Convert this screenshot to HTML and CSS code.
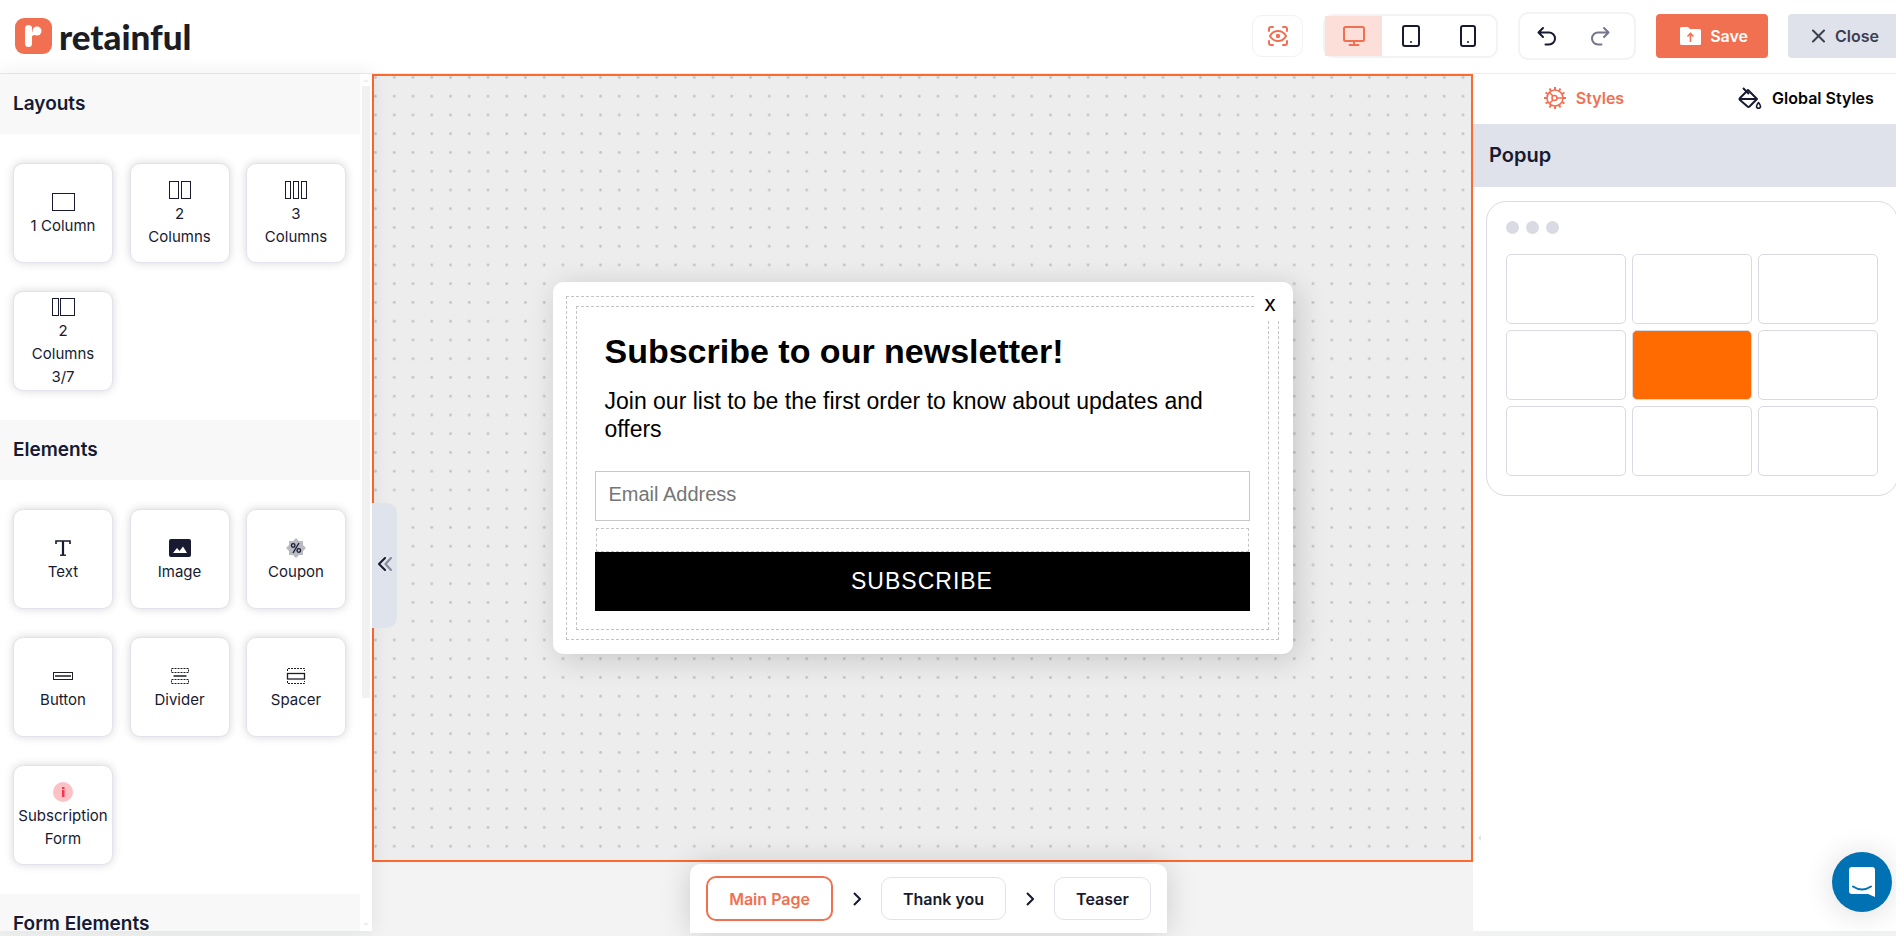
FILE: index.html
```
<!DOCTYPE html>
<html lang="en">
<head>
    <meta charset="UTF-8">
    <meta name="viewport" content="width=device-width, initial-scale=1.0">
    <title>Retainful - Popup Editor</title>
    <link rel="stylesheet" href="styles.css">
</head>
<body>
    <!-- Top bar -->
    <header class="topbar">
        <a class="logo" href="#">
            <svg width="37" height="36" viewBox="0 0 37 36"><rect width="37" height="36" rx="9" fill="#f27052"/><rect x="10" y="7" width="7" height="22" rx="3.500" fill="#fff"/><path d="M15 17c3 0 4-2 5-4" stroke="#fff" stroke-width="3" fill="none"/><circle cx="22" cy="13" r="4.500" fill="#fff"/></svg>
            <span>retainful</span>
        </a>
        <div class="actions">
            <button class="preview" type="button" aria-label="Preview">
                <svg width="22" height="22" viewBox="0 0 22 22" fill="none" stroke="#f27052" stroke-width="2" stroke-linecap="round"><path d="M2 6V4a2 2 0 0 1 2-2h2M16 2h2a2 2 0 0 1 2 2v2M20 16v2a2 2 0 0 1-2 2h-2M6 20H4a2 2 0 0 1-2-2v-2"/><path d="M3 11c2-3.500 5-5 8-5s6 1.500 8 5c-2 3.500-5 5-8 5s-6-1.500-8-5z"/><circle cx="11" cy="11" r="1.200" fill="#f27052"/></svg>
            </button>
            <div class="group devices">
                <button class="active" type="button" aria-label="Desktop">
                    <svg width="24" height="22" viewBox="0 0 24 22" fill="none" stroke="#f27052" stroke-width="2" stroke-linecap="round"><rect x="2" y="2" width="20" height="14" rx="1.500"/><path d="M12 16v4M7.500 20h9"/></svg>
                </button>
                <button type="button" aria-label="Tablet">
                    <svg width="20" height="24" viewBox="0 0 20 24" fill="none" stroke="#171a30" stroke-width="2"><rect x="2" y="2" width="16" height="20" rx="2"/><circle cx="10" cy="18" r="1" fill="#171a30" stroke="none"/></svg>
                </button>
                <button type="button" aria-label="Mobile">
                    <svg width="18" height="24" viewBox="0 0 18 24" fill="none" stroke="#171a30" stroke-width="2"><rect x="2" y="2" width="14" height="20" rx="2"/><circle cx="9" cy="18" r="1" fill="#171a30" stroke="none"/></svg>
                </button>
            </div>
            <div class="group history">
                <button type="button" aria-label="Undo">
                    <svg width="20" height="20" viewBox="0 0 20 20" fill="none" stroke="#171a30" stroke-width="2" stroke-linecap="round" stroke-linejoin="round"><path d="M6 2L1.500 6.500L6 11M2 6.500h10a6 6 0 0 1 0 12H8.500"/></svg>
                </button>
                <button type="button" aria-label="Redo">
                    <svg width="20" height="20" viewBox="0 0 20 20" fill="none" stroke="#73768a" stroke-width="2" stroke-linecap="round" stroke-linejoin="round"><path d="M14 2l4.500 4.500L14 11M18 6.500H8a6 6 0 0 0 0 12h3.500"/></svg>
                </button>
            </div>
            <button class="btn save" type="button">
                <svg width="21" height="18" viewBox="0 0 21 18"><path d="M0 1.500Q0 0 1.500 0H8l2 2h9.500Q21 2 21 3.500v13Q21 18 19.500 18h-18Q0 18 0 16.500z" fill="#fff"/><path d="M10.500 15V7M7.500 9.500l3-3 3 3" stroke="#f27052" stroke-width="1.600" fill="none"/></svg>
                Save
            </button>
            <button class="btn close" type="button">
                <svg width="13" height="14" viewBox="0 0 13 14" stroke="#3b3f50" stroke-width="2" stroke-linecap="round"><path d="M1 1.500l11 11M12 1.500l-11 11"/></svg>
                Close
            </button>
        </div>
    </header>

    <main class="workspace">
        <!-- Blocks -->
        <aside class="sidebar">
            <div class="blocks">
                <h2>Layouts</h2>
                <div class="cards">
                    <button class="card" type="button">
                        <svg width="24" height="24" viewBox="0 0 24 24" fill="none" stroke="#171a30"><rect x="1.500" y="3.500" width="22" height="17"/></svg>
                        1 Column
                    </button>
                    <button class="card" type="button">
                        <svg width="24" height="24" viewBox="0 0 24 24" fill="none" stroke="#171a30"><rect x="1.500" y="3.500" width="9" height="17"/><rect x="13.500" y="3.500" width="9" height="17"/></svg>
                        2<br>Columns
                    </button>
                    <button class="card" type="button">
                        <svg width="24" height="24" viewBox="0 0 24 24" fill="none" stroke="#171a30"><rect x="1.500" y="3.500" width="5" height="17"/><rect x="9.500" y="3.500" width="5" height="17"/><rect x="17.500" y="3.500" width="5" height="17"/></svg>
                        3<br>Columns
                    </button>
                    <button class="card" type="button">
                        <svg width="24" height="24" viewBox="0 0 24 24" fill="none" stroke="#171a30"><rect x="1.500" y="3.500" width="6" height="17"/><rect x="9.500" y="3.500" width="14" height="17"/></svg>
                        2<br>Columns<br>3/7
                    </button>
                </div>

                <h2>Elements</h2>
                <div class="cards">
                    <button class="card" type="button">
                        <svg width="24" height="24" viewBox="0 0 24 24" fill="none" stroke="#171a30"><path d="M5 8V5h14v3" stroke-width="1.600"/><path d="M12 5v14" stroke-width="2.200"/><path d="M9 19.200h6" stroke-width="1.400"/></svg>
                        Text
                    </button>
                    <button class="card" type="button">
                        <svg width="24" height="24" viewBox="0 0 24 24"><rect x="1" y="3" width="22" height="18" rx="2" fill="#171a30"/><path d="M5 17l4-5 2.500 3L15 10.500l4 6.500z" fill="#fff"/></svg>
                        Image
                    </button>
                    <button class="card" type="button">
                        <svg width="24" height="24" viewBox="0 0 24 24" fill="none" stroke="#171a30" stroke-width="1.300"><path d="M12 2l3 3h4v4l3 3-3 3v4h-4l-3 3-3-3H5v-4l-3-3 3-3V5h4z" fill="#b9bac2" stroke="none"/><circle cx="9.200" cy="9.500" r="1.800"/><circle cx="14.800" cy="14.500" r="1.800"/><path d="M15 7l-6 10"/></svg>
                        Coupon
                    </button>
                    <button class="card" type="button">
                        <svg width="24" height="24" viewBox="0 0 24 24" fill="none" stroke="#1d1e26"><rect x="2.500" y="8.500" width="19" height="7"/><path d="M4 12h16" stroke-width="1.500"/></svg>
                        Button
                    </button>
                    <button class="card" type="button">
                        <svg width="24" height="24" viewBox="0 0 24 24" fill="none" stroke="#1d1e26"><path d="M3.500 4.500h17v4h-17zM3.500 15.500h17v4h-17z" stroke-dasharray="2 1"/><path d="M5.500 12h13" stroke-width="1.500"/></svg>
                        Divider
                    </button>
                    <button class="card" type="button">
                        <svg width="24" height="24" viewBox="0 0 24 24" fill="none" stroke="#1d1e26"><path d="M3.500 7V4.500h17V7M3.500 17v2.500h17V17" stroke-dasharray="2 1"/><rect x="3.500" y="9.500" width="17" height="5.500" stroke-width="1.300"/></svg>
                        Spacer
                    </button>
                    <button class="card" type="button">
                        <svg width="24" height="24" viewBox="0 0 24 24"><circle cx="12" cy="12" r="10" fill="#fdc0c5"/><rect x="11" y="10" width="2.500" height="7" fill="#f5364c"/><rect x="11" y="7" width="2.500" height="2" fill="#f5364c"/></svg>
                        Subscription<br>Form
                    </button>
                </div>

                <h2>Form Elements</h2>
            </div>
            <div class="scrollbar">
                <svg width="8" height="12" viewBox="0 0 8 12"><path d="M1 8l3-3 3 3z" fill="#eee"/></svg>
                <div class="thumb"></div>
                <svg width="8" height="12" viewBox="0 0 8 12"><path d="M1 4l3 3 3-3z" fill="#eee"/></svg>
            </div>
            <button class="collapse" type="button" aria-label="Collapse">
                <svg width="16" height="14" viewBox="0 0 16 14" fill="none" stroke-width="2" stroke-linecap="round" stroke-linejoin="round"><path d="M14 1L8.500 7l5.500 6" stroke="#85899a"/><path d="M8 1L2 7l6 6" stroke="#171a30"/></svg>
            </button>
        </aside>

        <!-- Canvas -->
        <section class="center">
            <div class="canvas">
                <form class="popup">
                    <div class="outline">
                        <div class="outline content">
                            <h1>Subscribe to our newsletter!</h1>
                            <p>Join our list to be the first order to know about updates and offers</p>
                            <input type="email" placeholder="Email Address" aria-label="Email Address">
                            <div class="spacer"></div>
                            <button class="subscribe" type="button">SUBSCRIBE</button>
                        </div>
                    </div>
                    <button class="dismiss" type="button">x</button>
                </form>
            </div>
            <div class="footer">
                <nav class="pages">
                    <button class="page current" type="button">Main Page</button>
                    <svg width="8" height="14" viewBox="0 0 8 14" fill="none" stroke="#171a30" stroke-width="2"><path d="M1 1l6 6-6 6"/></svg>
                    <button class="page" type="button">Thank you</button>
                    <svg width="8" height="14" viewBox="0 0 8 14" fill="none" stroke="#171a30" stroke-width="2"><path d="M1 1l6 6-6 6"/></svg>
                    <button class="page" type="button">Teaser</button>
                </nav>
            </div>
        </section>

        <!-- Settings -->
        <aside class="settings">
            <div class="settings-inner">
                <div class="tabs">
                    <button class="tab selected" type="button">
                        <svg width="22" height="22" viewBox="0 0 22 22" fill="none" stroke="#f27052" stroke-width="1.600"><circle cx="11" cy="11" r="8"/><circle cx="10.500" cy="11" r="2.500"/><path d="M13 11h6M9 9L5.500 5.500M9 13l-3.500 3.500"/><path d="M11 0v3M11 19v3M0 11h3M19 11h3M5.500 1.500L7 4M15 18l1.500 2.500M16.500 1.500L15 4M7 18l-1.500 2.500M1.500 5.500L4 7M18 15l2.500 1.500M20.500 5.500L18 7M4 15l-2.500 1.500" stroke-width="2"/></svg>
                        Styles
                    </button>
                    <button class="tab" type="button">
                        <svg width="24" height="22" viewBox="0 0 24 22" fill="none" stroke="#171a30" stroke-width="2" stroke-linejoin="round"><path d="M10 3l9 9-7.500 7.500q-1 1-2 0L2 13q-1-1 0-2z"/><path d="M2 12h17M5 1l6 6"/><path d="M20.500 15.500q-2 2.500-2 3.700a2 2 0 0 0 4 0q0-1.200-2-3.700z" stroke-width="1.600"/></svg>
                        Global Styles
                    </button>
                </div>
                <h2>Popup</h2>
                <div class="position">
                    <div class="window-dots"><span></span><span></span><span></span></div>
                    <div class="cells">
                        <button type="button" aria-label="Top left"></button>
                        <button type="button" aria-label="Top center"></button>
                        <button type="button" aria-label="Top right"></button>
                        <button type="button" aria-label="Middle left"></button>
                        <button class="on" type="button" aria-label="Middle center"></button>
                        <button type="button" aria-label="Middle right"></button>
                        <button type="button" aria-label="Bottom left"></button>
                        <button type="button" aria-label="Bottom center"></button>
                        <button type="button" aria-label="Bottom right"></button>
                    </div>
                </div>
            </div>
            <svg class="scroll-left" width="4" height="8" viewBox="0 0 4 8"><path d="M4 1L1 4l3 3z" fill="#e4e4e4"/></svg>
        </aside>
    </main>

    <button class="chat" type="button" aria-label="Open chat">
        <svg width="28" height="32" viewBox="0 0 28 32"><path d="M4 1h20q3 0 3 3v27l-7-3H4q-3 0-3-3V4q0-3 3-3z" fill="#fff"/><path d="M5 20.500q9 6 18 0" stroke="#0071b2" stroke-width="2" stroke-linecap="round" fill="none"/></svg>
    </button>
</body>
</html>
```
FILE: styles.css
```
* {
    box-sizing: border-box;
}
body {
    font-family: Inter, "Liberation Sans", sans-serif;
    margin: 0;
    height: 100vh;
    display: flex;
    flex-direction: column;
    overflow: hidden;
    background-color: #f1f2f2;
    color: #171a30;
}
h1, h2, p {
    margin: 0;
}
button {
    font-family: inherit;
    color: inherit;
    background: none;
    border: none;
    padding: 0;
    cursor: pointer;
}
svg {
    flex: none;
}

/* Top bar */
.topbar {
    display: flex;
    align-items: center;
    justify-content: space-between;
    height: 74px;
    flex: none;
    padding: 0 0 2px 15px;
    background: white;
    border-bottom: 1px solid #ececec;
}
.logo {
    display: flex;
    align-items: center;
    gap: 7px;
    color: #1b1c24;
    font-family: Lato, sans-serif;
    font-size: 35px;
    line-height: 36px;
    font-weight: 900;
    text-decoration: none;
}
.actions {
    display: flex;
    align-items: center;
    gap: 20px;
    margin-right: -7px;
}
.actions button {
    display: flex;
    align-items: center;
    justify-content: center;
}
.preview {
    width: 51px;
    height: 42px;
    border: 1px solid #f2f2f2;
    border-radius: 10px;
}
.group {
    display: flex;
    border: 2px solid #f3f3f3;
    border-radius: 10px;
}
.group button {
    width: 57px;
    height: 40px;
}
.history {
    padding-right: 8px;
}
.history button {
    width: 53px;
    height: 44px;
}
.devices .active {
    background: #fddfd9;
}
.btn {
    gap: 10px;
    height: 44px;
    padding: 0 24px;
    border-radius: 4px;
    font-size: 16px;
    font-weight: 600;
}
.save {
    gap: 9px;
    background: #f27052;
    color: white;
    padding-right: 20px;
}
.close {
    background: #dfe2ea;
    color: #3b3f50;
}

.workspace {
    display: flex;
    flex: 1;
    min-height: 0;
}

/* Blocks */
.sidebar {
    position: relative;
    z-index: 1;
    display: flex;
    width: 372px;
    flex: none;
    margin-bottom: 5px;
    background: white;
    box-shadow: 0 0 20px rgba(0, 0, 0, 0.08);
}
.blocks {
    width: 360px;
    overflow: hidden;
}
.blocks h2 {
    padding: 0 13px;
    background: #f8f8f8;
    font-size: 19px;
    line-height: 60px;
    font-weight: 600;
}
.cards {
    display: grid;
    grid-template-columns: repeat(3, 100px);
    justify-content: space-between;
    row-gap: 28px;
    padding: 29px 14px 29px 13px;
}
.card {
    display: flex;
    flex-direction: column;
    align-items: center;
    justify-content: center;
    height: 100px;
    border: 1px solid #e2e3ec;
    border-radius: 10px;
    background: white;
    box-shadow: 0 0 10px rgba(0, 0, 0, 0.16);
    font-size: 15px;
    line-height: 23px;
}
.scrollbar {
    display: flex;
    flex-direction: column;
    width: 8px;
    margin-left: 2px;
}
.thumb {
    height: 612px;
    margin-bottom: auto;
    background: #f1f1f1;
}
.collapse {
    position: absolute;
    left: 100%;
    top: 50%;
    width: 25px;
    height: 125px;
    border-radius: 0 10px 10px 0;
    background: #dfe3eb;
}

/* Canvas */
.center {
    display: flex;
    flex-direction: column;
    flex: 1;
    min-width: 0;
    background: #f3f3f3;
}
.canvas {
    display: flex;
    align-items: center;
    justify-content: center;
    flex: 1;
    border: 2px solid #fb6a2f;
    background-color: #ededed;
    background-image: url("data:image/svg+xml,%3Csvg xmlns='http://www.w3.org/2000/svg' viewBox='0 0 4 4'%3E%3Cpattern id='d' width='1' height='1' patternUnits='userSpaceOnUse'%3E%3Ccircle cx='.08' cy='.08' r='.075' fill='%23c4c4c4'/%3E%3C/pattern%3E%3Crect width='4' height='4' fill='url(%23d)'/%3E%3C/svg%3E");
    background-size: 75px 75px;
}
.popup {
    position: relative;
    width: 740px;
    padding: 14px 14px 14px 13px;
    border-radius: 10px;
    background: white;
    box-shadow: 5px 5px 30px rgba(0, 0, 0, 0.16);
    font-family: "Liberation Sans", Arial, sans-serif;
    color: black;
}
.outline {
    padding: 9px;
    border: 1px dashed #c4c4c4;
}
.content {
    display: flex;
    flex-direction: column;
    padding: 18px;
}
.popup h1 {
    padding: 6px 10px;
    font-size: 34px;
    line-height: 40px;
}
.popup p {
    padding: 10px 10px 28px;
    font-size: 23px;
    line-height: 28px;
}
.popup input {
    height: 50px;
    padding: 0 13px 4px;
    border: 1px solid #c8c8c8;
    font-family: inherit;
    font-size: 20px;
}
.spacer {
    height: 24px;
    margin: 7px 1px 0;
    border: 1px dashed #c4c4c4;
}
.subscribe {
    height: 59px;
    background: black;
    color: white;
    font-size: 23px;
    letter-spacing: 1px;
}
.dismiss {
    position: absolute;
    top: 4px;
    right: 6px;
    width: 33px;
    height: 35px;
    padding-bottom: 2px;
    background: white;
    font-family: Inter, sans-serif;
    font-size: 22px;
}

/* Page steps */
.footer {
    display: flex;
    justify-content: center;
    padding: 2px 0 3px 12px;
}
.pages {
    display: flex;
    align-items: center;
    gap: 20px;
    padding: 12px 16px;
    border-radius: 10px 10px 0 0;
    background: white;
    box-shadow: 0 0 30px rgba(0, 0, 0, 0.16);
}
.page {
    height: 43px;
    padding: 0 21px;
    border: 1px solid #e2e3ea;
    border-radius: 10px;
    font-size: 16px;
    font-weight: 600;
}
.page.current {
    height: 45px;
    border: 2px solid #f27052;
    color: #f27052;
}

/* Settings */
.settings {
    display: flex;
    flex-direction: column;
    width: 423px;
    flex: none;
    margin-bottom: 5px;
    overflow: hidden;
    background: white;
}
.settings-inner {
    width: 444px;
}
.tabs {
    display: flex;
    height: 50px;
}
.tab {
    display: flex;
    align-items: center;
    justify-content: center;
    flex: 1;
    gap: 10px;
    padding-bottom: 2px;
    color: #050505;
    font-size: 16px;
    font-weight: 600;
}
.tab.selected {
    color: #f27052;
}
.settings h2 {
    padding: 0 16px;
    background: #dfe2ea;
    font-size: 20px;
    line-height: 63px;
    font-weight: 600;
}
.position {
    margin: 14px 19px 0 13px;
    padding: 19px;
    border: 1px solid #d9dae4;
    border-radius: 20px;
}
.window-dots {
    display: flex;
    gap: 7px;
    margin-bottom: 20px;
}
.window-dots span {
    width: 13px;
    height: 13px;
    border-radius: 50%;
    background: #d9dae4;
}
.cells {
    display: grid;
    grid-template-columns: repeat(3, 120px);
    gap: 6px;
}
.cells button {
    height: 70px;
    border: 1px solid #d9dae4;
    border-radius: 5px;
}
.cells .on {
    background: #ff6b00;
}
.scroll-left {
    margin: auto 4px 89px;
}

/* Chat launcher */
.chat {
    position: fixed;
    z-index: 2;
    right: 4px;
    bottom: 24px;
    display: flex;
    align-items: center;
    justify-content: center;
    width: 60px;
    height: 60px;
    border-radius: 50%;
    background: #0071b2;
    box-shadow: 0 2px 30px rgba(0, 0, 0, 0.14);
}
```
